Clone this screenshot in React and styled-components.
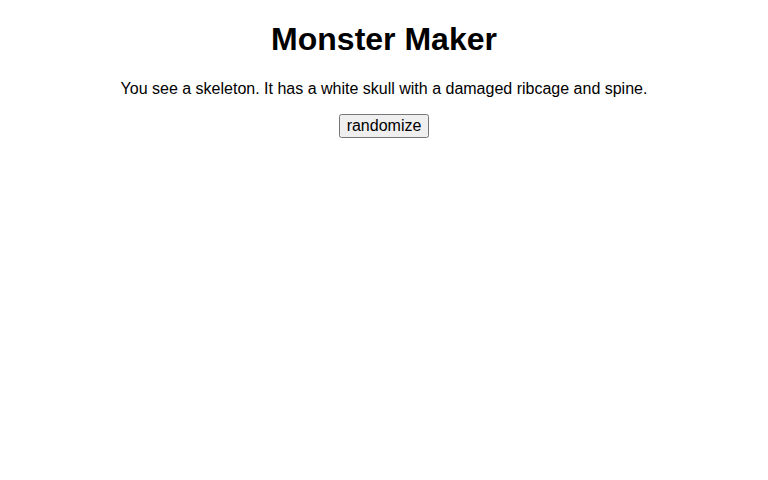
import React, { useState } from "react";
import styled, { createGlobalStyle } from "styled-components";

const GlobalStyle = createGlobalStyle`
  body {
    margin: 0;
    background: #ffffff;
    color: #000000;
    font-family: "Liberation Sans", Arial, sans-serif;
  }
`;

const Page = styled.main`
  display: flow-root;
  padding: 0 8px;
  text-align: center;
`;

const Title = styled.h1`
  font-size: 32px;
  font-weight: bold;
  margin: 21.44px 0;
`;

const Description = styled.p`
  font-size: 16px;
  margin: 16px 0;
`;

const RandomizeButton = styled.button`
  font-family: "Liberation Sans", Arial, sans-serif;
  font-size: 16px;
`;

const monsters = [
  "You see a skeleton. It has a white skull with a damaged ribcage and spine.",
  "You see a goblin. It has green skin with a crooked nose and sharp teeth.",
  "You see a troll. It has grey hide with a mossy back and heavy fists.",
];

export default function App() {
  const [index, setIndex] = useState(0);
  return (
    <>
      <GlobalStyle />
      <Page>
        <Title>Monster Maker</Title>
        <Description>{monsters[index]}</Description>
        <RandomizeButton
          onClick={() => setIndex(Math.floor(Math.random() * monsters.length))}
        >
          randomize
        </RandomizeButton>
      </Page>
    </>
  );
}
